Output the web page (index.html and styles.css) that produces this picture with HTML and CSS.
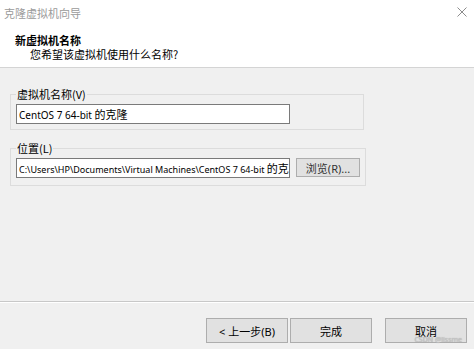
FILE: index.html
```html
<!DOCTYPE html>
<html lang="zh-CN">
<head>
  <meta charset="UTF-8">
  <title>克隆虚拟机向导</title>
  <link rel="stylesheet" href="styles.css">
</head>
<body>
  <div class="wizard">
    <div class="top">
      <div class="caption">
        <span class="caption-title">克隆虚拟机向导</span>
        <svg class="close" width="10" height="10" viewBox="0 0 10 10">
          <path d="M0.5 0.5 L9.5 9.5 M9.5 0.5 L0.5 9.5" stroke="#8c8c8c" stroke-width="1" fill="none"/>
        </svg>
      </div>
      <div class="heading">新虚拟机名称</div>
      <div class="subheading">您希望该虚拟机使用什么名称?</div>
    </div>

    <div class="content">
      <fieldset class="group group-name">
        <legend>虚拟机名称(V)</legend>
        <div class="field field-name">CentOS 7 64-bit <span class="cjk">的克隆</span></div>
      </fieldset>

      <fieldset class="group group-location">
        <legend>位置(L)</legend>
        <div class="row">
          <div class="field field-path">C:\Users\HP\Documents\Virtual Machines\CentOS 7 64-bit <span class="cjk">的克隆</span></div>
          <div class="btn btn-browse">浏览(R)...</div>
        </div>
      </fieldset>
    </div>

    <div class="footer">
      <div class="btn btn-back">&lt; 上一步(B)</div>
      <div class="btn btn-finish">完成</div>
      <div class="btn btn-cancel">取消</div>
      <span class="watermark">CSDN @lissme</span>
    </div>
  </div>
</body>
</html>
```

FILE: styles.css
```css
body {
  margin: 0;
  background-color: #f0f0f0;
  font-family: "Noto Sans", "Noto Sans CJK SC", sans-serif;
  font-size: 11px;
  color: #000000;
}

.wizard {
  width: 474px;
  height: 349px;
  display: flex;
  flex-direction: column;
}

.top {
  height: 67px;
  background-color: #ffffff;
  border-bottom: 1px solid #d4d4d4;
}

.caption {
  height: 25px;
  display: flex;
  align-items: center;
  justify-content: space-between;
  padding: 0 7px 0 4px;
}

.caption-title {
  font-family: "Noto Sans CJK SC", sans-serif;
  color: #9a9a9a;
  font-size: 11px;
}

.close {
  margin-top: -2px;
}

.heading {
  margin-top: 8px;
  padding-left: 15px;
  line-height: 14px;
  font-weight: bold;
  font-family: "Noto Sans CJK SC", sans-serif;
}

.subheading {
  padding-left: 30px;
  line-height: 14px;
  font-family: "Noto Sans CJK SC", sans-serif;
}

.content {
  flex: 1;
  padding: 18px 0 0 10px;
}

.group {
  width: 342px;
  margin: 0;
  padding: 2px 5px 5px 5px;
  border: 1px solid #dcdcdc;
}

.group legend {
  padding: 0 1px;
  line-height: 16px;
  font-family: "Noto Sans CJK SC", sans-serif;
}

.group-location {
  margin-top: 10px;
  padding-bottom: 7px;
}

.row {
  display: flex;
  align-items: flex-start;
  gap: 6px;
}

.field {
  width: 268px;
  height: 18px;
  line-height: 18px;
  padding: 0 2px;
  background-color: #ffffff;
  border: 1px solid #7a7a7a;
  white-space: nowrap;
  overflow: hidden;
}

.field-name {
  font-size: 10px;
}

.field-path {
  font-size: 9px;
}

.field .cjk {
  font-family: "Noto Sans CJK SC", sans-serif;
  font-size: 11px;
}

.btn {
  box-sizing: border-box;
  display: flex;
  align-items: center;
  justify-content: center;
  background-color: #e1e1e1;
  border: 1px solid #adadad;
}

.btn-browse {
  width: 64px;
  height: 19px;
  color: #333333;
}

.footer {
  position: relative;
  height: 48px;
  border-top: 1px solid #c8c8c8;
  box-shadow: inset 0 1px 0 #ffffff;
  display: flex;
  align-items: flex-start;
  justify-content: flex-end;
  padding: 16px 7px 0 0;
  box-sizing: border-box;
}

.footer .btn {
  width: 82px;
  height: 25px;
}

.btn-finish {
  margin-left: 2px;
}

.btn-cancel {
  margin-left: 13px;
}

.watermark {
  position: absolute;
  right: 12px;
  bottom: 5px;
  font-size: 7px;
  color: #c8c8c8;
  text-shadow: 0 0 1px #9a9a9a;
}
```
